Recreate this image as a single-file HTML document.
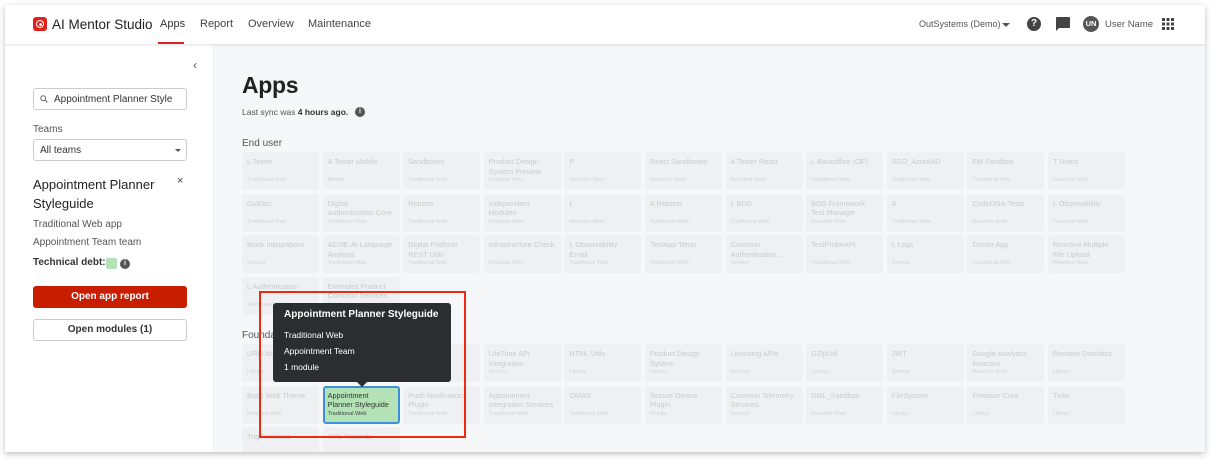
<!DOCTYPE html>
<html><head><meta charset="utf-8"><style>
*{box-sizing:border-box;margin:0;padding:0}
body{width:1220px;height:467px;background:#fff;font-family:"Liberation Sans",sans-serif;position:relative;overflow:hidden}
.frame{position:absolute;left:5px;top:5px;width:1200px;height:447px;background:#f6f7f9;box-shadow:0 2px 6px rgba(0,0,0,.25);overflow:hidden}
.hdr{position:absolute;left:0;top:0;width:1200px;height:39px;background:#fff;box-shadow:0 1px 3px rgba(0,0,0,.12);z-index:2}
.side{position:absolute;left:0;top:39px;width:209px;height:408px;background:#fff;border-right:1px solid #eceef0}
.abs{position:absolute}
.grid{position:absolute;display:grid;grid-template-columns:repeat(11,77px);column-gap:3.6px;row-gap:3.5px;grid-auto-rows:38px}
.c{background:#eff0f2;border-radius:3px;padding:5px 5px 0 5px;position:relative;color:#c8cacd;font-size:7.3px;line-height:9.5px;overflow:hidden}
.c i{position:absolute;left:5px;bottom:6px;font-style:normal;font-size:5.6px;color:#d2d4d7;line-height:7px}
.hl{background:#b3e2b6;border:2px solid #3d8fe0;color:#333;padding:3px}
.hl i{color:#444;left:3px;bottom:4px}
</style></head><body>
<div class="frame">
 <div class="hdr">
  <div class="abs" style="left:28px;top:12px;width:14px;height:14px;background:#e0211d;border-radius:3px"><div class="abs" style="left:3px;top:3px;width:8px;height:8px;border:1.5px solid #fff;border-radius:50%"></div><div class="abs" style="left:5.5px;top:5.5px;width:3px;height:3px;background:#fff;border-radius:50%"></div></div>
  <div class="abs" style="left:47px;top:12px;font-size:13.5px;color:#222">AI Mentor Studio</div>
  <div class="abs" style="left:155px;top:13px;font-size:11px;color:#333">Apps</div>
  <div class="abs" style="left:153px;top:37px;width:26px;height:2px;background:#d22"></div>
  <div class="abs" style="left:195px;top:13px;font-size:11px;color:#444">Report</div>
  <div class="abs" style="left:243px;top:13px;font-size:11px;color:#444">Overview</div>
  <div class="abs" style="left:303px;top:13px;font-size:11px;color:#444">Maintenance</div>
  <div class="abs" style="left:914px;top:14px;font-size:9px;color:#555">OutSystems (Demo)</div>
  <div class="abs" style="left:997px;top:18px;border:4px solid transparent;border-top:4px solid #555;border-bottom:0"></div>
  <div class="abs" style="left:1022px;top:12px;width:14px;height:14px;border-radius:50%;background:#444;color:#fff;font-size:10px;font-weight:bold;text-align:center;line-height:14px">?</div>
  <div class="abs" style="left:1051px;top:12px;width:14px;height:11px;background:#444;border-radius:1px"></div>
  <div class="abs" style="left:1051px;top:22px;border-left:4px solid #444;border-bottom:4px solid transparent"></div>
  <div class="abs" style="left:1078px;top:11px;width:16px;height:16px;border-radius:50%;background:#555;color:#fff;font-size:7.5px;font-weight:bold;text-align:center;line-height:16px">UN</div>
  <div class="abs" style="left:1100px;top:14px;font-size:9.5px;color:#555">User Name</div>
  <svg class="abs" style="left:1157px;top:13px" width="12" height="12"><g fill="#444"><rect x="0" y="0" width="3" height="3"/><rect x="4.5" y="0" width="3" height="3"/><rect x="9" y="0" width="3" height="3"/><rect x="0" y="4.5" width="3" height="3"/><rect x="4.5" y="4.5" width="3" height="3"/><rect x="9" y="4.5" width="3" height="3"/><rect x="0" y="9" width="3" height="3"/><rect x="4.5" y="9" width="3" height="3"/><rect x="9" y="9" width="3" height="3"/></g></svg>
 </div>
 <div class="side">
  <div class="abs" style="left:188px;top:14px;font-size:12px;color:#555">&#8249;</div>
  <div class="abs" style="left:28px;top:44px;width:154px;height:22px;border:1px solid #ccc;border-radius:3px;font-size:10px;color:#333;padding:5px 0 0 20px;white-space:nowrap;overflow:hidden">Appointment Planner Style</div>
  <svg class="abs" style="left:35px;top:51px" width="8" height="8"><circle cx="3.2" cy="3.2" r="2.4" fill="none" stroke="#666" stroke-width="1"/><path d="M5 5L7.5 7.5" stroke="#666"/></svg>
  <div class="abs" style="left:28px;top:80px;font-size:10px;color:#555">Teams</div>
  <div class="abs" style="left:28px;top:95px;width:154px;height:22px;border:1px solid #ccc;border-radius:3px;font-size:10px;color:#333;padding:5px 0 0 6px">All teams</div>
  <div class="abs" style="left:170px;top:105px;border:3px solid transparent;border-top:3px solid #555;border-bottom:0"></div>
  <div class="abs" style="left:28px;top:131px;font-size:13px;color:#222;line-height:19px;width:140px">Appointment Planner Styleguide</div>
  <div class="abs" style="left:172px;top:131px;font-size:11px;color:#444">×</div>
  <div class="abs" style="left:28px;top:175px;font-size:10px;color:#555">Traditional Web app</div>
  <div class="abs" style="left:28px;top:193px;font-size:10px;color:#555">Appointment Team team</div>
  <div class="abs" style="left:28px;top:213px;font-size:10px;color:#333;font-weight:bold">Technical debt:</div>
  <div class="abs" style="left:101px;top:214px;width:11px;height:11px;background:#b3e2b6;border-radius:2px"></div>
  <div class="abs" style="left:115px;top:215px;width:10px;height:10px;background:#555;border-radius:50%;color:#fff;font-size:7px;text-align:center;line-height:10px;font-weight:bold">i</div>
  <div class="abs" style="left:28px;top:242px;width:154px;height:22px;background:#c91d00;border-radius:3px;color:#fff;font-size:10px;font-weight:bold;text-align:center;line-height:22px">Open app report</div>
  <div class="abs" style="left:28px;top:275px;width:154px;height:22px;background:#fff;border:1px solid #ccc;border-radius:3px;color:#333;font-size:10px;font-weight:bold;text-align:center;line-height:20px">Open modules (1)</div>
 </div>
 <div class="abs" style="left:237px;top:67px;font-size:23px;color:#222;font-weight:bold;letter-spacing:-0.3px">Apps</div>
 <div class="abs" style="left:237px;top:102px;font-size:8.5px;color:#555">Last sync was <b style="color:#333">4 hours ago.</b></div>
 <div class="abs" style="left:350px;top:102px;width:10px;height:10px;background:#555;border-radius:50%;color:#fff;font-size:7px;text-align:center;line-height:10px;font-weight:bold">i</div>
 <div class="abs" style="left:237px;top:133px;font-size:10px;color:#555">End user</div>
 <div class="grid" style="left:237px;top:147px">
  <div class="c">L Tester<i>Traditional Web</i></div><div class="c">A Tester Mobile<i>Mobile</i></div><div class="c">Sandboxes<i>Traditional Web</i></div><div class="c">Product Design System Preview<i>Reactive Web</i></div><div class="c">P<i>Reactive Web</i></div><div class="c">React Sandboxes<i>Reactive Web</i></div><div class="c">A Tester React<i>Reactive Web</i></div><div class="c">L Backoffice (OE)<i>Traditional Web</i></div><div class="c">SSO_AzureAD<i>Traditional Web</i></div><div class="c">FM Sandbox<i>Traditional Web</i></div><div class="c">T Users<i>Reactive Web</i></div>
  <div class="c">OutDoc<i>Traditional Web</i></div><div class="c">Digital Authentication Core<i>Traditional Web</i></div><div class="c">Reports<i>Traditional Web</i></div><div class="c">Independent Modules<i>Reactive Web</i></div><div class="c">L<i>Reactive Web</i></div><div class="c">A Reports<i>Traditional Web</i></div><div class="c">L BDD<i>Traditional Web</i></div><div class="c">BDD Framework Test Manager<i>Reactive Web</i></div><div class="c">A<i>Traditional Web</i></div><div class="c">CodeDNA-Tests<i>Reactive Web</i></div><div class="c">L Observability<i>Reactive Web</i></div>
  <div class="c">Mock Integrations<i>Service</i></div><div class="c">ACME.AI Language Analysis<i>Traditional Web</i></div><div class="c">Digital Platform REST Utils<i>Traditional Web</i></div><div class="c">Infrastructure Check<i>Reactive Web</i></div><div class="c">L Observability Email<i>Traditional Web</i></div><div class="c">TestApp Temp<i>Traditional Web</i></div><div class="c">Common Authentication ...<i>Service</i></div><div class="c">TestProbeAPI<i>Traditional Web</i></div><div class="c">L Logs<i>Service</i></div><div class="c">Doctor App<i>Traditional Web</i></div><div class="c">Reactive Multiple File Upload<i>Reactive Web</i></div>
  <div class="c">L Authentication<i>Traditional Web</i></div><div class="c">Extended Product Common Services<i>Service</i></div>
 </div>
 <div class="abs" style="left:237px;top:325px;font-size:10px;color:#555">Foundation</div>
 <div class="grid" style="left:237px;top:339px">
  <div class="c">URLUtils<i>Library</i></div><div class="c">Sanitization<i>Library</i></div><div class="c">Binary Data<i>Library</i></div><div class="c">LifeTime API Integration<i>Service</i></div><div class="c">HTML Utils<i>Library</i></div><div class="c">Product Design System<i>Library</i></div><div class="c">Licensing APIs<i>Service</i></div><div class="c">GZipUtil<i>Library</i></div><div class="c">JWT<i>Service</i></div><div class="c">Google Analytics Reactive<i>Reactive Web</i></div><div class="c">Remove Diacritics<i>Library</i></div>
  <div class="c">Base Web Theme<i>Reactive Web</i></div><div class="c hl">Appointment Planner Styleguide<i>Traditional Web</i></div><div class="c">Push Notifications Plugin<i>Traditional Web</i></div><div class="c">Appointment Integration Services<i>Traditional Web</i></div><div class="c">OMAS<i>Traditional Web</i></div><div class="c">Secure Device Plugin<i>Mobile</i></div><div class="c">Common Telemetry Services<i>Service</i></div><div class="c">DML_Sandbox<i>Reactive Web</i></div><div class="c">FileSystem<i>Library</i></div><div class="c">Firebase Core<i>Library</i></div><div class="c">Ticks<i>Library</i></div>
  <div class="c">TrigFunctions<i>Library</i></div><div class="c">XML Records<i>Library</i></div>
 </div>
 <div class="abs" style="left:268px;top:298px;width:178px;height:79px;background:#2b2d30;border-radius:3px;color:#fff;padding:6px 11px;z-index:3">
  <div style="font-size:10px;font-weight:bold;margin-bottom:7px">Appointment Planner Styleguide</div>
  <div style="font-size:8.5px;line-height:16px">Traditional Web<br>Appointment Team<br>1 module</div>
 </div>
 <div class="abs" style="left:352px;top:377px;border:5px solid transparent;border-top:5px solid #2b2d30;border-bottom:0;z-index:3"></div>
 <div class="abs" style="left:254px;top:286px;width:207px;height:147px;border:2px solid #ee2a12;z-index:4"></div>
</div>
</body></html>
